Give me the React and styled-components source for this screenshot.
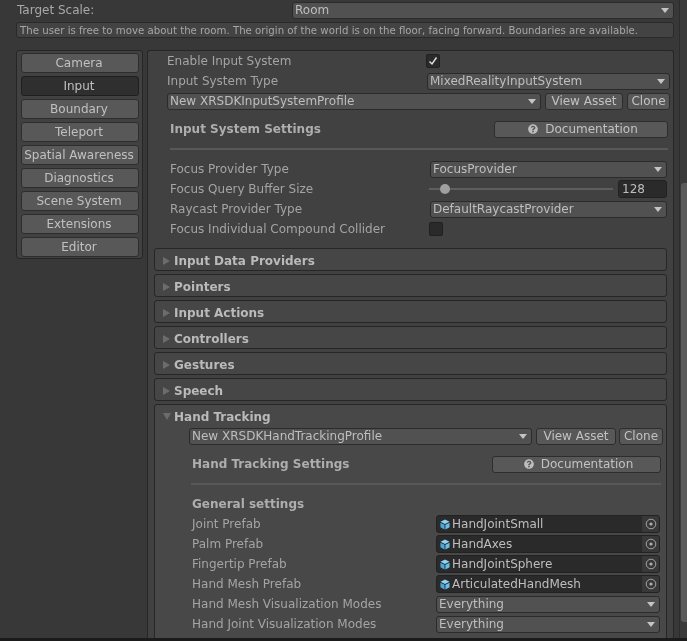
import React from 'react';
import styled, { createGlobalStyle } from 'styled-components';
import { FaQuestionCircle } from 'react-icons/fa';

const GlobalStyle = createGlobalStyle`
  html, body {
    margin: 0;
    padding: 0;
    background: #383838;
  }
  * {
    box-sizing: border-box;
  }
`;

const Page = styled.div`
  width: 687px;
  height: 641px;
  overflow: hidden;
  display: flex;
  flex-direction: column;
  background: #383838;
  color: #bdbdbd;
  font-family: "DejaVu Sans", sans-serif;
  font-size: 12px;
  letter-spacing: 0;
  filter: blur(0.3px);
`;

const Body = styled.div`
  flex: 1;
  min-height: 0;
  display: flex;
`;

const Footer = styled.div`
  height: 3px;
  background: #1b1b1b;
`;

const Main = styled.div`
  flex: 1;
  min-width: 0;
  display: flex;
  flex-direction: column;
  padding: 2px 5px 0 16px;
`;

const Scrollbar = styled.div`
  width: 8px;
  border-left: 1px solid #2c2c2c;
  background: #3a3a3a;
  display: flex;
  flex-direction: column;
  padding: 183px 0 0 1px;
`;

const Thumb = styled.div`
  flex: 1;
  background: #5a5a5a;
  border-radius: 3px 0 0 3px;
  margin-bottom: 16px;
`;

const TopRow = styled.div`
  display: flex;
  align-items: center;
  height: 16px;
  margin-bottom: 4px;
`;

const TopLabel = styled.div`
  width: 276px;
  padding-left: 1px;
  color: #a9a9a9;
`;

const HelpBox = styled.div`
  height: 16px;
  display: flex;
  align-items: center;
  padding-left: 3px;
  background: #434343;
  border: 1px solid #2a2a2a;
  border-radius: 3px;
  font-size: 10.2px;
  color: #a6a6a6;
  white-space: nowrap;
  overflow: hidden;
`;

const Columns = styled.div`
  flex: 1;
  min-height: 0;
  display: flex;
  align-items: flex-start;
  gap: 4px;
  margin-top: 12px;
`;

const SideNav = styled.nav`
  width: 127px;
  flex-shrink: 0;
  display: flex;
  flex-direction: column;
  gap: 3px;
  padding: 2px 3px 1px 4px;
  background: #414141;
  border: 1px solid #262626;
  border-radius: 3px;
`;

const NavButton = styled.div`
  height: 20px;
  display: flex;
  align-items: center;
  justify-content: center;
  padding: 0 2px 1px 0;
  border-radius: 3px;
  border: 1px solid ${p => (p.$active ? '#1f1f1f' : '#2d2d2d')};
  background: ${p => (p.$active ? '#2f2f2f' : '#585858')};
  color: #c0c0c0;
  font-size: 12px;
  white-space: nowrap;
`;

const Panel = styled.div`
  flex: 1;
  min-width: 0;
  align-self: stretch;
  overflow: hidden;
  padding: 0 3px 0 6px;
  background: #414141;
  border: 1px solid #262626;
  border-bottom: 0;
  border-radius: 3px 3px 0 0;
`;

const Row = styled.div`
  height: 20px;
  display: grid;
  grid-template-columns: ${p => p.$labelWidth}px 1fr;
  align-items: center;
  padding: ${p => p.$padding || '0'};
`;

const Label = styled.div`
  color: #a4a4a4;
  white-space: nowrap;
`;

const CheckBox = styled.div`
  width: 14px;
  height: 14px;
  margin-left: -1px;
  display: flex;
  align-items: center;
  justify-content: center;
  background: #2a2a2a;
  border: 1px solid #202020;
  border-radius: 2px;
  color: #dcdcdc;
`;

const SelectBox = styled.div`
  flex: ${p => (p.$grow ? 1 : 'none')};
  min-width: 0;
  height: 17px;
  display: flex;
  align-items: center;
  justify-content: space-between;
  padding: 0 4px 0 2px;
  background: #515151;
  border: 1px solid #2b2b2b;
  border-radius: 3px;
  color: #bebebe;
  white-space: nowrap;
`;

const Caret = styled.span`
  width: 0;
  height: 0;
  flex-shrink: 0;
  border-left: 4px solid transparent;
  border-right: 4px solid transparent;
  border-top: 5px solid #c4c4c4;
`;

const ProfileRow = styled.div`
  height: 20px;
  display: flex;
  align-items: center;
  gap: 4px;
  padding: ${p => p.$padding};
`;

const SmallButton = styled.div`
  width: ${p => p.$width}px;
  height: 17px;
  margin-left: ${p => p.$shift || 0}px;
  flex-shrink: 0;
  display: flex;
  align-items: center;
  justify-content: center;
  background: #585858;
  border: 1px solid #2d2d2d;
  border-radius: 3px;
  color: #c2c2c2;
  white-space: nowrap;
`;

const SettingsHeader = styled.div`
  height: 20px;
  margin-top: 8px;
  display: flex;
  align-items: center;
  justify-content: space-between;
  padding: ${p => p.$padding};
`;

const SettingsTitle = styled.div`
  font-weight: 700;
  font-size: 12px;
  color: #aeaeae;
  white-space: nowrap;
`;

const DocButton = styled.div`
  width: ${p => p.$width}px;
  height: 17px;
  display: flex;
  align-items: center;
  justify-content: center;
  gap: 7px;
  padding-left: 4px;
  background: #585858;
  border: 1px solid #2d2d2d;
  border-radius: 3px;
  color: #c2c2c2;
`;

const Divider = styled.div`
  height: 2px;
  margin: ${p => p.$margin};
  background: #585858;
`;

const SliderWrap = styled.div`
  display: flex;
  align-items: center;
  gap: 5px;
  width: 238px;
  margin-left: -1px;
`;

const SliderTrack = styled.div`
  position: relative;
  flex: 1;
  height: 2px;
  background: #5e5e5e;
`;

const SliderThumb = styled.div`
  position: absolute;
  left: 11px;
  top: -4px;
  width: 10px;
  height: 10px;
  border-radius: 50%;
  background: #a0a0a0;
`;

const NumberField = styled.div`
  width: 49px;
  height: 18px;
  display: flex;
  align-items: center;
  padding-left: 3px;
  background: #2a2a2a;
  border: 1px solid #212121;
  border-radius: 3px;
  color: #bebebe;
`;

const Foldouts = styled.div`
  display: flex;
  flex-direction: column;
  gap: 3px;
  margin-top: 9px;
  padding-right: 3px;
`;

const Foldout = styled.div`
  background: ${p => (p.$open ? '#484848' : '#464646')};
  border: 1px solid #262626;
  border-radius: 3px;
  height: ${p => (p.$open ? 'auto' : '23px')};
  padding-bottom: ${p => (p.$open ? '20px' : '0')};
`;

const FoldoutHead = styled.div`
  height: 21px;
  display: flex;
  align-items: center;
  gap: 3px;
  padding: 2px 0 0 8px;
  font-weight: 700;
  font-size: 12px;
  color: #bababa;
`;

const ArrowRight = styled.span`
  width: 0;
  height: 0;
  margin-right: 1px;
  border-top: 4px solid transparent;
  border-bottom: 4px solid transparent;
  border-left: 7px solid #6c6c6c;
`;

const ArrowDown = styled.span`
  width: 0;
  height: 0;
  border-left: 4px solid transparent;
  border-right: 4px solid transparent;
  border-top: 7px solid #6c6c6c;
`;

const SectionTitle = styled(SettingsTitle)`
  height: 20px;
  line-height: 20px;
  margin-top: 9px;
  padding-left: 37px;
`;

const ObjectField = styled.div`
  width: 224px;
  height: 18px;
  display: flex;
  align-items: center;
  background: #2a2a2a;
  border: 1px solid #222222;
  border-radius: 3px;
  color: #bebebe;
  overflow: hidden;
`;

const ObjectName = styled.div`
  flex: 1;
  display: flex;
  align-items: center;
  gap: 2px;
  padding-left: 3px;
  white-space: nowrap;
`;

const ObjectPicker = styled.div`
  width: 17px;
  height: 100%;
  display: flex;
  align-items: center;
  justify-content: center;
  background: #383838;
`;

const ModeSelect = styled(SelectBox)`
  width: 224px;
`;

const CubeIcon = () => (
  <svg width="10" height="11" viewBox="0 0 11 12">
    <path d="M5.5 0.5 L10.5 3 L5.5 5.5 L0.5 3 Z" fill="#8fd3f5" />
    <path d="M0.5 4 L5 6.2 L5 11.5 L0.5 9 Z" fill="#4aa8dc" />
    <path d="M10.5 4 L6 6.2 L6 11.5 L10.5 9 Z" fill="#6cbfe8" />
  </svg>
);

const TargetIcon = () => (
  <svg width="12" height="12" viewBox="0 0 12 12">
    <circle cx="6" cy="6" r="4.8" fill="none" stroke="#b0b0b0" strokeWidth="0.9" />
    <circle cx="6" cy="6" r="1.6" fill="#b0b0b0" />
  </svg>
);

const CheckIcon = () => (
  <svg width="10" height="10" viewBox="0 0 10 10">
    <path d="M1.5 5.5 L4 8 L8.5 1.5" fill="none" stroke="#e2e2e2" strokeWidth="1.4" />
  </svg>
);

const navItems = [
  'Camera',
  'Input',
  'Boundary',
  'Teleport',
  'Spatial Awareness',
  'Diagnostics',
  'Scene System',
  'Extensions',
  'Editor',
];

const closedSections = [
  'Input Data Providers',
  'Pointers',
  'Input Actions',
  'Controllers',
  'Gestures',
  'Speech',
];

const prefabs = [
  ['Joint Prefab', 'HandJointSmall'],
  ['Palm Prefab', 'HandAxes'],
  ['Fingertip Prefab', 'HandJointSphere'],
  ['Hand Mesh Prefab', 'ArticulatedHandMesh'],
];

const modes = ['Hand Mesh Visualization Modes', 'Hand Joint Visualization Modes'];

function Select({ children, grow }) {
  return (
    <SelectBox $grow={grow}>
      {children}
      <Caret />
    </SelectBox>
  );
}

function Documentation({ width }) {
  return (
    <DocButton $width={width}>
      <FaQuestionCircle size={10} color="#bdbdbd" />
      Documentation
    </DocButton>
  );
}

export default function App() {
  return (
    <Page>
      <GlobalStyle />
      <Body>
        <Main>
          <TopRow>
            <TopLabel>Target Scale:</TopLabel>
            <Select grow>Room</Select>
          </TopRow>
          <HelpBox>
            The user is free to move about the room. The origin of the world is on the floor, facing forward. Boundaries are available.
          </HelpBox>
          <Columns>
            <SideNav>
              {navItems.map(item => (
                <NavButton key={item} $active={item === 'Input'}>{item}</NavButton>
              ))}
            </SideNav>
            <Panel>
              <Row $labelWidth={260} $padding="0 0 0 13px">
                <Label>Enable Input System</Label>
                <CheckBox><CheckIcon /></CheckBox>
              </Row>
              <Row $labelWidth={260} $padding="0 0 0 13px">
                <Label>Input System Type</Label>
                <Select>MixedRealityInputSystem</Select>
              </Row>
              <ProfileRow $padding="0 0 0 13px">
                <Select grow>New XRSDKInputSystemProfile</Select>
                <SmallButton $width={78}>View Asset</SmallButton>
                <SmallButton $width={43}>Clone</SmallButton>
              </ProfileRow>
              <SettingsHeader $padding="0 2px 0 16px">
                <SettingsTitle>Input System Settings</SettingsTitle>
                <Documentation width={174} />
              </SettingsHeader>
              <Divider $margin="9px 2px 9px 16px" />
              <Row $labelWidth={260} $padding="0 3px 0 16px">
                <Label>Focus Provider Type</Label>
                <Select>FocusProvider</Select>
              </Row>
              <Row $labelWidth={260} $padding="0 3px 0 16px">
                <Label>Focus Query Buffer Size</Label>
                <SliderWrap>
                  <SliderTrack><SliderThumb /></SliderTrack>
                  <NumberField>128</NumberField>
                </SliderWrap>
              </Row>
              <Row $labelWidth={260} $padding="0 3px 0 16px">
                <Label>Raycast Provider Type</Label>
                <Select>DefaultRaycastProvider</Select>
              </Row>
              <Row $labelWidth={260} $padding="0 3px 0 16px">
                <Label>Focus Individual Compound Collider</Label>
                <CheckBox />
              </Row>
              <Foldouts>
                {closedSections.map(name => (
                  <Foldout key={name}>
                    <FoldoutHead><ArrowRight />{name}</FoldoutHead>
                  </Foldout>
                ))}
                <Foldout $open>
                  <FoldoutHead><ArrowDown />Hand Tracking</FoldoutHead>
                  <ProfileRow $padding="0 3px 0 34px">
                    <Select grow>New XRSDKHandTrackingProfile</Select>
                    <SmallButton $width={80}>View Asset</SmallButton>
                    <SmallButton $width={44} $shift={-1}>Clone</SmallButton>
                  </ProfileRow>
                  <SettingsHeader $padding="0 5px 0 37px">
                    <SettingsTitle>Hand Tracking Settings</SettingsTitle>
                    <Documentation width={169} />
                  </SettingsHeader>
                  <Divider $margin="9px 5px 0 36px" />
                  <SectionTitle>General settings</SectionTitle>
                  {prefabs.map(([label, value]) => (
                    <Row key={label} $labelWidth={244} $padding="0 0 0 37px">
                      <Label>{label}</Label>
                      <ObjectField>
                        <ObjectName><CubeIcon />{value}</ObjectName>
                        <ObjectPicker><TargetIcon /></ObjectPicker>
                      </ObjectField>
                    </Row>
                  ))}
                  {modes.map(label => (
                    <Row key={label} $labelWidth={244} $padding="0 0 0 37px">
                      <Label>{label}</Label>
                      <ModeSelect>Everything<Caret /></ModeSelect>
                    </Row>
                  ))}
                </Foldout>
              </Foldouts>
            </Panel>
          </Columns>
        </Main>
        <Scrollbar>
          <Thumb />
        </Scrollbar>
      </Body>
      <Footer />
    </Page>
  );
}
